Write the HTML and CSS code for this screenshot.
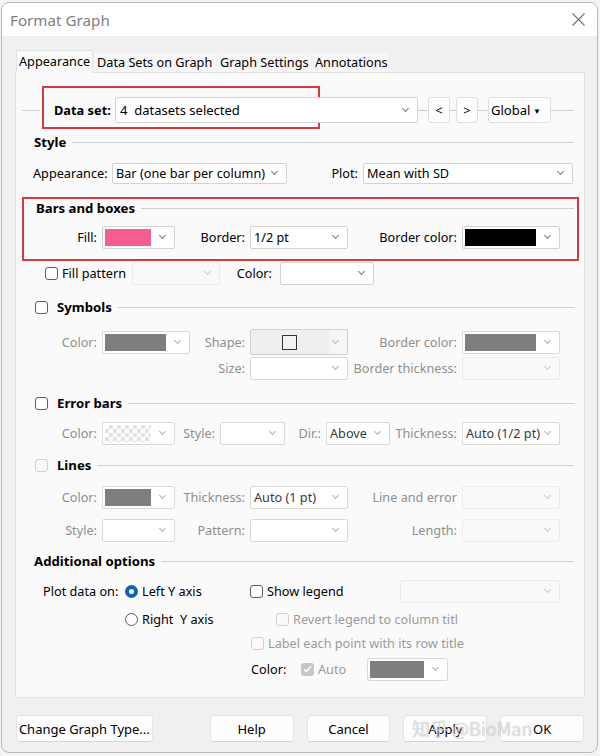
FILE: index.html
```html
<!DOCTYPE html>
<html>
<head>
<meta charset="utf-8">
<link rel="stylesheet" href="styles.css">
</head>
<body>
<div class="win">
  <div class="titlebar">
    <span class="title">Format Graph</span>
    <svg class="close" width="13" height="13" viewBox="0 0 13 13"><path d="M0.5 0.5L12.5 12.5M12.5 0.5L0.5 12.5" stroke="#707070" stroke-width="1.1" fill="none"/></svg>
  </div>
  <div class="body">
    <div class="tabs">
      <div class="tab active t1">Appearance</div>
      <div class="tab t2">Data Sets on Graph</div>
      <div class="tab t3">Graph Settings</div>
      <div class="tab t4">Annotations</div>
    </div>
    <div class="panel">
      <div class="redbox rb1"></div>
      <div class="redbox rb2"></div>

      <div class="row r-ds">
        <i class="hl w18 ml6"></i>
        <span class="dslabel">Data set:</span>
        <div class="cb tall w303"><span>4&nbsp; datasets selected</span></div>
        <i class="hl w10"></i>
        <div class="mini">&lt;</div>
        <i class="hl w6"></i>
        <div class="mini">&gt;</div>
        <i class="hl w10"></i>
        <div class="glob"><span>Global</span><span class="tri">&#9660;</span></div>
        <i class="hl w23"></i>
      </div>

      <div class="row head m6 hs18"><b>Style</b><i class="hl grow"></i></div>

      <div class="row m7">
        <span class="lab la1">Appearance:</span>
        <div class="cb short w175"><span>Bar (one bar per column)</span></div>
        <span class="lab rt w76">Plot:</span>
        <div class="cb short w210"><span>Mean with SD</span></div>
      </div>

      <div class="row head m11 hs20"><b>Bars and boxes</b><i class="hl grow"></i></div>

      <div class="row m5">
        <span class="lab rt w86">Fill:</span>
        <div class="cb sw w73"><i class="swatch pink"></i></div>
        <span class="lab rt w75">Border:</span>
        <div class="cb w98"><span>1/2 pt</span></div>
        <span class="lab rt w114">Border color:</span>
        <div class="cb sw w98"><i class="swatch black"></i></div>
      </div>

      <div class="row m12">
        <span class="grp ml29 w87"><i class="ck"></i><span>Fill pattern</span></span>
        <div class="cb off w88"></div>
        <span class="lab rt w60 pr8">Color:</span>
        <div class="cb w94"></div>
      </div>

      <div class="row head m10 hs19"><i class="ck"></i><b class="gap9">Symbols</b><i class="hl grow"></i></div>

      <div class="row m11 gray">
        <span class="lab rt w86">Color:</span>
        <div class="cb sw w88 dim"><i class="swatch grey"></i></div>
        <span class="lab rt w60">Shape:</span>
        <div class="cb shape w98"><i class="sq"></i></div>
        <span class="lab rt w114">Border color:</span>
        <div class="cb sw w98 dim"><i class="swatch grey"></i></div>
      </div>

      <div class="row m2 gray">
        <span class="lab rt w234">Size:</span>
        <div class="cb w98 dim"></div>
        <span class="lab rt w114">Border thickness:</span>
        <div class="cb off w98"></div>
      </div>

      <div class="row head m11 hs19"><i class="ck"></i><b class="gap9">Error bars</b><i class="hl grow"></i></div>

      <div class="row m6 gray">
        <span class="lab rt w86">Color:</span>
        <div class="cb sw w73 dim"><i class="swatch checker"></i></div>
        <span class="lab rt w45">Style:</span>
        <div class="cb w65 dim"></div>
        <span class="lab rt w41">Dir.:</span>
        <div class="cb w64 dim"><span class="val">Above</span></div>
        <span class="lab rt w72">Thickness:</span>
        <div class="cb w98 dim"><span class="val">Auto (1/2 pt)</span></div>
      </div>

      <div class="row head m8 hs19"><i class="ck dis"></i><b class="gap9">Lines</b><i class="hl grow"></i></div>

      <div class="row m8 gray">
        <span class="lab rt w86">Color:</span>
        <div class="cb sw w73 dim"><i class="swatch grey"></i></div>
        <span class="lab rt w75">Thickness:</span>
        <div class="cb w98 dim"><span class="val">Auto (1 pt)</span></div>
        <span class="lab rt w114">Line and error</span>
        <div class="cb off w98"></div>
      </div>

      <div class="row m9 gray">
        <span class="lab rt w86">Style:</span>
        <div class="cb w73 dim"></div>
        <span class="lab rt w75">Pattern:</span>
        <div class="cb w98 dim"></div>
        <span class="lab rt w114">Length:</span>
        <div class="cb off w98"></div>
      </div>

      <div class="row head m7 hs18"><b>Additional options</b><i class="hl grow"></i></div>

      <div class="row m6">
        <span class="lab ml27 w82">Plot data on:</span>
        <span class="grp w125"><i class="rd on"></i><span>Left Y axis</span></span>
        <span class="grp w150"><i class="ck"></i><span>Show legend</span></span>
        <div class="cb off w160"></div>
      </div>

      <div class="row m4">
        <span class="grp ml109 w151"><i class="rd"></i><span>Right&nbsp; Y axis</span></span>
        <span class="grp clip w182 gray2"><i class="ck dis"></i><span>Revert legend to column title</span></span>
      </div>

      <div class="row m0">
        <span class="grp ml235 gray2"><i class="ck dis"></i><span>Label each point with its row title</span></span>
      </div>

      <div class="row m2">
        <span class="lab ml235 w50">Color:</span>
        <span class="grp w66 gray2"><i class="ck chk"><svg width="9" height="8" viewBox="0 0 9 8"><path d="M1 4.2L3.4 6.5L8 1.2" stroke="#fff" stroke-width="1.3" fill="none"/></svg></i><span>Auto</span></span>
        <div class="cb sw w81 dim"><i class="swatch grey"></i></div>
      </div>
    </div>

    <div class="buttons">
      <div class="pb wide">Change Graph Type...</div>
      <div class="pb push">Help</div>
      <div class="pb">Cancel</div>
      <div class="pb">Apply</div>
      <div class="pb">OK</div>
    </div>
  </div>
  <div class="watermark">知乎 @BioMan</div>
</div>
</body>
</html>
```

FILE: styles.css
```css
* { box-sizing: border-box; }
html, body { margin: 0; padding: 0; }
body {
  width: 600px;
  height: 756px;
  overflow: hidden;
  background: #f4f4f4;
  font-family: "Noto Sans", "Open Sans", sans-serif;
  font-size: 12.7px;
  color: #000;
}
.win {
  position: relative;
  margin: 2px 0 0 1px;
  width: 597px;
  height: 751px;
  border: 1px solid #b8b8b8;
  border-radius: 8px;
  overflow: hidden;
  background: #f0f0f0;
}
.titlebar {
  height: 33px;
  background: #fff;
  display: flex;
  align-items: center;
  justify-content: space-between;
  padding: 0 12px 0 8px;
}
.title { font-size: 15.2px; color: #808080; }
.close { display: block; }

.body { padding: 14px 0 0 14px; }
.tabs { display: flex; align-items: flex-end; height: 22px; }
.tab {
  height: 19px;
  line-height: 18px;
  padding-left: 3px;
  background: #f6f6f6;
  margin-right: 1px;
  white-space: nowrap;
}
.tab.active {
  height: 23px;
  line-height: 21px;
  margin-bottom: -1px;
  padding-left: 2px;
  background: #fafafa;
  border: 1px solid #e2e2e2;
  border-bottom: none;
  position: relative;
  z-index: 1;
}
.t1 { width: 77px; }
.t2 { width: 122px; }
.t3 { width: 94px; }
.t4 { width: 76px; }

.panel {
  position: relative;
  margin-left: -1px;
  width: 570px;
  height: 626px;
  background: #fafafa;
  border: 1px solid #e2e2e2;
}
.redbox {
  position: absolute;
  border: 2px solid #d8393f;
  pointer-events: none;
}
.rb1 { left: 26px; top: 13px; width: 278px; height: 43px; }
.rb2 { left: 6px; top: 124px; width: 557px; height: 64px; }

.row { display: flex; align-items: center; height: 24px; white-space: nowrap; }
.r-ds { height: 28px; margin-top: 23px; }
.m0 { margin-top: 0; }
.m2 { margin-top: 2px; }
.m4 { margin-top: 4px; }
.m5 { margin-top: 5px; }
.m6 { margin-top: 6px; }
.m7 { margin-top: 7px; }
.m8 { margin-top: 8px; }
.m9 { margin-top: 9px; }
.m10 { margin-top: 10px; }
.m11 { margin-top: 11px; }
.m12 { margin-top: 12px; }

.head { font-weight: bold; }
.head b { font-weight: bold; font-size: 13.2px; }
.hs18 { margin-left: 18px; width: 540px; }
.hs19 { margin-left: 19px; width: 539px; }
.hs20 { margin-left: 20px; width: 538px; }
.gap9 { margin-left: 9px; }

.hl { display: block; height: 1px; background: #cfcfcf; flex-shrink: 0; }
.hl.grow { flex: 1; margin-left: 6px; }
.ml6 { margin-left: 6px; }
.w6 { width: 6px; }
.w10 { width: 10px; }
.w18 { width: 18px; }
.w23 { width: 23px; }

.dslabel { font-weight: bold; margin-left: 14px; width: 61px; font-size: 12.8px; }

.lab { flex-shrink: 0; }
.rt { text-align: right; padding-right: 5px; }
.pr8 { padding-right: 8px; }
.la1 { margin-left: 17px; width: 79px; }
.ml27 { margin-left: 27px; }
.ml29 { margin-left: 29px; }
.ml109 { margin-left: 109px; }
.ml235 { margin-left: 235px; }

.w41 { width: 41px; }
.w45 { width: 45px; }
.w50 { width: 50px; }
.w60 { width: 60px; }
.w64 { width: 64px; }
.w65 { width: 65px; }
.w66 { width: 66px; }
.w72 { width: 72px; }
.w73 { width: 73px; }
.w75 { width: 75px; }
.w76 { width: 76px; }
.w81 { width: 81px; }
.w82 { width: 82px; }
.w86 { width: 86px; }
.w87 { width: 87px; }
.w88 { width: 88px; }
.w94 { width: 94px; }
.w98 { width: 98px; }
.w114 { width: 114px; }
.w125 { width: 125px; }
.w150 { width: 150px; }
.w151 { width: 151px; }
.w160 { width: 160px; }
.w175 { width: 175px; }
.w182 { width: 182px; }
.w210 { width: 210px; }
.w234 { width: 234px; }
.w303 { width: 303px; }

.gray { color: #8f8f8f; }
.gray2 { color: #9a9a9a; }

/* combo boxes */
.cb {
  position: relative;
  flex-shrink: 0;
  height: 23px;
  background: #fff;
  border: 1px solid #d2d2d2;
  border-radius: 2px;
  display: flex;
  align-items: center;
  padding-left: 3px;
  color: #000;
  overflow: hidden;
}
.cb::after {
  content: "";
  position: absolute;
  right: 9px;
  top: 50%;
  width: 4px;
  height: 4px;
  margin-top: -4px;
  border-right: 1px solid #7a7a7a;
  border-bottom: 1px solid #7a7a7a;
  transform: rotate(45deg);
}
.cb.tall { height: 26px; padding-left: 4px; font-size: 13px; }
.cb.short { height: 21px; }
.cb.dim { border-color: #d9d9d9; }
.cb.dim::after { border-color: #b0b0b0; }
.cb.off { background: #f9f9f9; border-color: #ececec; }
.cb.off::after { border-color: #c8c8c8; }
.cb .val { color: #3a3a3a; }
.cb.sw { padding: 2px 0 2px 2px; align-items: stretch; }
.swatch { display: block; width: calc(100% - 23px); }
.pink { background: #f55f8f; }
.black { background: #000; }
.grey { background: #7e7e7e; }
.checker {
  background-color: #fff;
  background-image: repeating-conic-gradient(#e2e2e2 0% 25%, #ffffff 0% 50%);
  background-size: 8px 8px;
}
.cb.shape {
  height: 26px;
  background: linear-gradient(to right, #efefef 0, #efefef 78px, #f6f6f6 78px);
  border-color: #cfcfcf;
  justify-content: flex-start;
  padding-left: 31px;
}
.cb.shape::after { border-color: #b5b5b5; }
.sq { display: block; width: 15px; height: 15px; border: 1px solid #333; background: #f2f2f2; }

/* data set buttons */
.mini, .glob {
  flex-shrink: 0;
  height: 26px;
  background: #fdfdfd;
  border: 1px solid #dedede;
  border-radius: 3px;
  display: flex;
  align-items: center;
  justify-content: center;
  font-size: 13px;
}
.mini { width: 22px; }
.glob { width: 63px; justify-content: space-between; padding: 0 9px 0 2px; font-size: 13px; }
.tri { font-size: 8px; }

/* checkboxes and radios */
.grp { display: flex; align-items: center; flex-shrink: 0; }
.grp > span { margin-left: 4px; }
.clip { overflow: hidden; }
.ck {
  display: block;
  flex-shrink: 0;
  width: 13px;
  height: 13px;
  border: 1px solid #5e5e5e;
  border-radius: 3px;
  background: #fff;
}
.ck.dis { border-color: #d2d2d2; background: #fafafa; }
.ck.chk {
  border: none;
  background: #c6c6c6;
  display: flex;
  align-items: center;
  justify-content: center;
}
.ck.chk svg { display: block; }
.rd {
  display: block;
  flex-shrink: 0;
  width: 13px;
  height: 13px;
  border-radius: 50%;
  border: 1px solid #5e5e5e;
  background: #fff;
}
.rd.on { border: 4px solid #0f62b8; }

/* bottom buttons */
.buttons { display: flex; margin-top: 17px; height: 27px; }
.pb {
  width: 84px;
  height: 27px;
  margin-right: 13px;
  background: #fdfdfd;
  border: 1px solid #e4e4e4;
  border-bottom-color: #d6d6d6;
  border-radius: 4px;
  display: flex;
  align-items: center;
  justify-content: center;
  font-size: 13px;
}
.pb.wide { width: 137px; margin-right: 0; }
.pb.push { margin-left: 57px; }

.watermark {
  position: absolute;
  left: 410px;
  top: 712px;
  font-family: "Noto Sans CJK SC", "Noto Sans", sans-serif;
  font-size: 18px;
  color: rgba(255, 255, 255, 0.55);
  text-shadow: 0 0 1px rgba(120, 120, 120, 0.6);
  pointer-events: none;
  white-space: nowrap;
}
```
